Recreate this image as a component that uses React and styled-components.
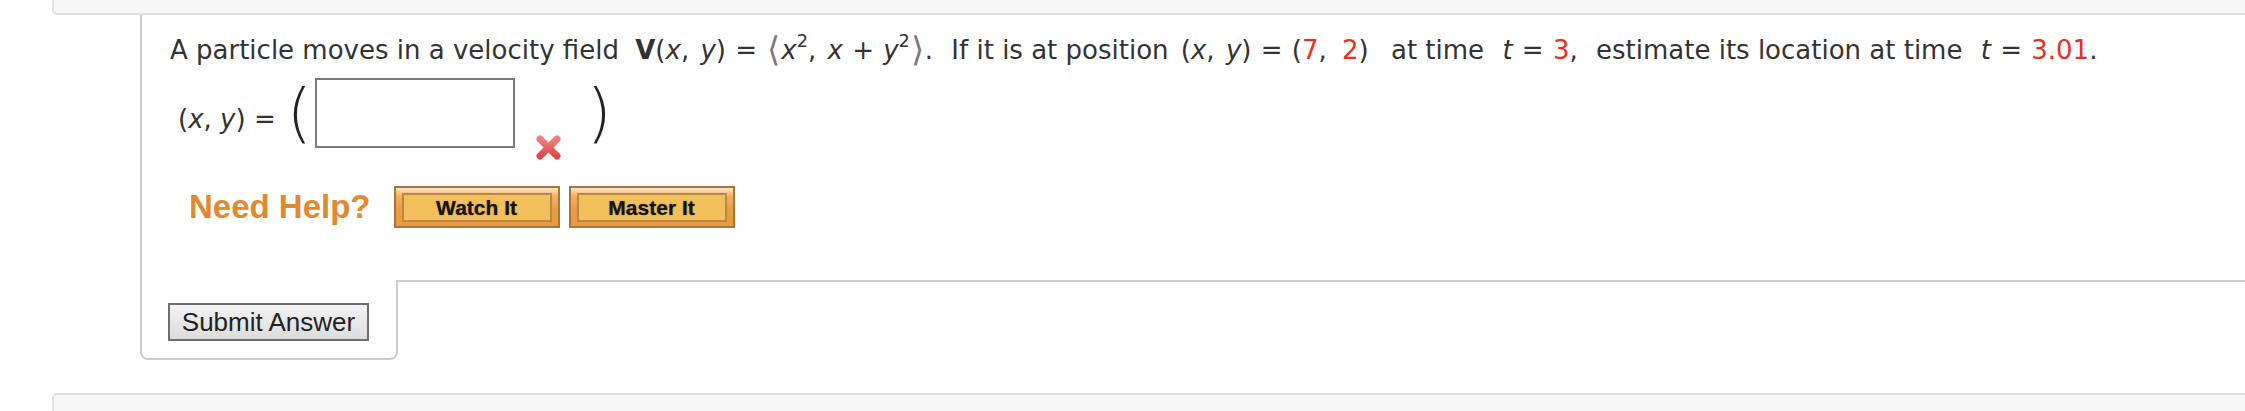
import React from 'react';
import styled, { createGlobalStyle } from 'styled-components';

const Global = createGlobalStyle`
  html, body { margin: 0; padding: 0; background: #fff; }
  body { font-family: "DejaVu Sans", Verdana, sans-serif; color: #333; }
  * { box-sizing: border-box; }
`;

const Page = styled.div`
  width: 2245px;
  height: 411px;
  overflow: hidden;
  display: flex;
  flex-direction: column;
`;

const TopPanel = styled.div`
  margin-left: 52px;
  height: 15px;
  flex: none;
  background: #f6f6f6;
  border-left: 2px solid #e2e2e2;
  border-bottom: 2px solid #dedede;
  border-bottom-left-radius: 5px;
`;

const BottomPanel = styled.div`
  margin-left: 52px;
  margin-top: 33px;
  flex: 1;
  background: #f6f6f6;
  border-left: 2px solid #e2e2e2;
  border-top: 2px solid #dedede;
  border-top-left-radius: 5px;
`;

const Question = styled.div`
  margin-left: 140px;
  display: flex;
  flex-direction: column;
`;

const Body = styled.div`
  height: 265px;
  border-left: 2px solid #cccccc;
  padding: 15px 0 0 28px;
  display: flex;
  flex-direction: column;
  align-items: flex-start;
`;

const Prompt = styled.div`
  font-size: 26px;
  line-height: 40px;
  white-space: pre;
  color: #333;
`;

const M = styled.span`
  margin: 0 ${p => p.$mr ?? 10}px 0 ${p => p.$ml ?? 10}px;
`;

const Op = styled.span`
  margin: 0 1px;
`;

const Comma = styled.span`
  margin-right: ${p => p.$w ?? 3}px;
`;

const I = styled.i`
  font-style: italic;
`;

const B = styled.b`
  font-weight: bold;
`;

const R = styled.span`
  color: #e5301f;
`;

const Sup = styled.sup`
  font-size: 0.68em;
  line-height: 0;
  vertical-align: 0.68em;
`;

const Ang = styled.span`
  color: #7a7a7a;
  font-size: 1.32em;
  font-weight: 200;
  line-height: 0;
  vertical-align: -0.06em;
  margin: 0 1px;
`;

const AnswerRow = styled.div`
  margin-top: 8px;
  margin-left: 8px;
  display: flex;
  align-items: flex-start;
`;

const Label = styled.span`
  margin-top: 21px;
  font-size: 26px;
  line-height: 40px;
  white-space: nowrap;
`;

const BigParen = styled.span`
  font-family: "DejaVu Sans", sans-serif;
  font-weight: 200;
  font-size: 64px;
  line-height: 64px;
  margin-top: 3px;
  margin-left: ${p => p.$ml}px;
  color: #222;
`;

const AnswerBox = styled.input`
  width: 200px;
  height: 70px;
  margin-left: 3px;
  border: 2px solid #7b7b7b;
  background: #fff;
  outline: none;
  padding: 0 8px;
  font-size: 24px;
`;

const Wrong = styled.svg`
  margin-top: 56px;
  margin-left: 20px;
  width: 27px;
  height: 27px;
  flex: none;
`;

const HelpRow = styled.div`
  margin-top: 25px;
  margin-left: 19px;
  display: flex;
  align-items: center;
`;

const NeedHelp = styled.span`
  font-family: "Liberation Sans", Arial, sans-serif;
  font-weight: bold;
  font-size: 33px;
  color: #e4882f;
  margin-right: 23px;
  white-space: nowrap;
`;

const HelpButton = styled.button`
  width: 166px;
  height: 42px;
  margin-right: 9px;
  padding: 5px 6px 4px 6px;
  display: flex;
  border: 2px solid #a8743c;
  background: linear-gradient(#fde6c8 0%, #f1b064 22%, #ea9d44 55%, #e99a3e 100%);
  cursor: pointer;
`;

const HelpInner = styled.span`
  flex: 1;
  display: flex;
  align-items: center;
  justify-content: center;
  border: 2px solid #b98845;
  background: #f3bf5b;
  font-family: "Liberation Sans", Arial, sans-serif;
  font-weight: bold;
  font-size: 21px;
  color: #141414;
  text-shadow: 0 0 1px rgba(0,0,0,0.55);
`;

const Footer = styled.div`
  display: flex;
  height: 80px;
`;

const SubmitTab = styled.div`
  width: 258px;
  height: 80px;
  border: 2px solid #cccccc;
  border-top: none;
  border-radius: 0 0 8px 8px;
  padding: 23px 0 0 26px;
`;

const Filler = styled.div`
  flex: 1;
  border-top: 2px solid #cccccc;
  margin-left: -2px;
  border-top-left-radius: 3px;
`;

const SubmitButton = styled.button`
  width: 201px;
  height: 38px;
  border: 2px solid #6f6f6f;
  background: linear-gradient(#f3f3f3, #dcdcdc);
  font-family: "Liberation Sans", Arial, sans-serif;
  font-size: 26px;
  color: #222;
  padding: 0;
  display: flex;
  align-items: center;
  justify-content: center;
`;

function WrongMark() {
  return (
    <Wrong viewBox="0 0 27 27">
      <defs>
        <linearGradient id="xg" x1="0" y1="0" x2="0" y2="1">
          <stop offset="0" stopColor="#f17f7f" />
          <stop offset="1" stopColor="#df4a4a" />
        </linearGradient>
      </defs>
      <g stroke="url(#xg)" strokeWidth="7" strokeLinecap="round">
        <line x1="5" y1="5" x2="22" y2="22" />
        <line x1="22" y1="5" x2="5" y2="22" />
      </g>
    </Wrong>
  );
}

export default function App() {
  return (
    <Page>
      <Global />
      <TopPanel />
      <Question>
        <Body>
          <Prompt>
            {'A particle moves in a velocity field '}
            <M $ml={8}>
              <B>V</B>(<I>x</I><Comma>,</Comma> <I>y</I>) <Op>=</Op> <Ang>⟨</Ang><I>x</I><Sup>2</Sup><Comma>,</Comma> <I>x</I> <Op>+</Op> <I>y</I><Sup>2</Sup><Ang>⟩</Ang>.
            </M>
            {' If it is at position '}
            <M $ml={4} $mr={14}>(<I>x</I><Comma>,</Comma> <I>y</I>) <Op>=</Op> (<R>7</R><Comma $w={7}>,</Comma> <R>2</R>)</M>
            {' at time '}
            <M><I>t</I> <Op>=</Op> <R>3</R>,</M>
            {' estimate its location at time '}
            <M><I>t</I> <Op>=</Op> <R>3.01</R>.</M>
          </Prompt>
          <AnswerRow>
            <Label>(<I>x</I>, <I>y</I>) =</Label>
            <BigParen $ml={11}>(</BigParen>
            <AnswerBox type="text" aria-label="answer" />
            <WrongMark />
            <BigParen $ml={25}>)</BigParen>
          </AnswerRow>
          <HelpRow>
            <NeedHelp>Need Help?</NeedHelp>
            <HelpButton><HelpInner>Watch It</HelpInner></HelpButton>
            <HelpButton><HelpInner>Master It</HelpInner></HelpButton>
          </HelpRow>
        </Body>
        <Footer>
          <SubmitTab>
            <SubmitButton>Submit Answer</SubmitButton>
          </SubmitTab>
          <Filler />
        </Footer>
      </Question>
      <BottomPanel />
    </Page>
  );
}
